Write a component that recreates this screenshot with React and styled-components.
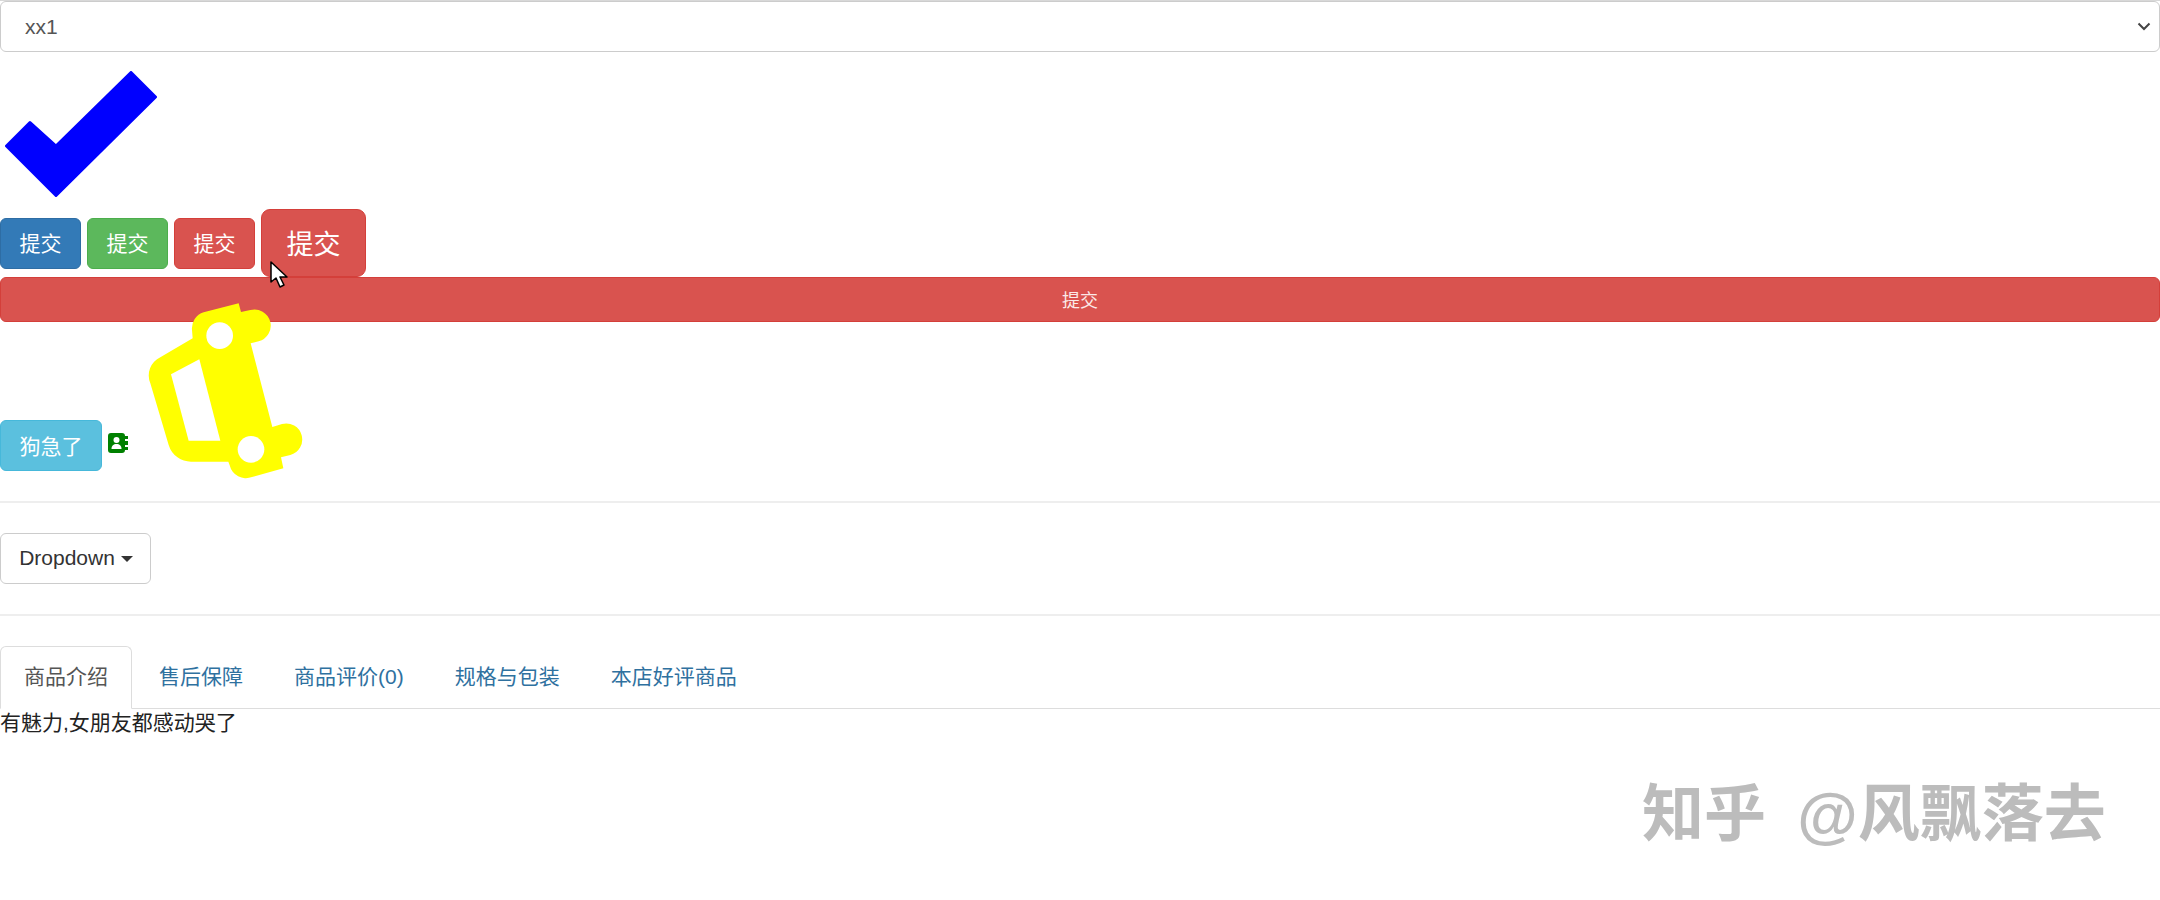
import React from "react";
import styled, { createGlobalStyle } from "styled-components";

const GlobalStyle = createGlobalStyle`
  * {
    box-sizing: border-box;
  }
  html, body {
    margin: 0;
    padding: 0;
    background: #fff;
  }
  body {
    font-family: "Liberation Sans", "Noto Sans CJK SC", sans-serif;
    font-size: 21px;
    line-height: 30px;
    color: #333;
  }
`;

const Page = styled.div`
  position: relative;
  min-height: 900px;
  border-top: 1px solid #d8d8d8;
  overflow: hidden;
`;

const Select = styled.select`
  display: block;
  width: 100%;
  height: 51px;
  padding: 0 40px 0 24px;
  border: 1px solid #ccc;
  border-radius: 6px;
  background-color: #fff;
  background-image: url("data:image/svg+xml,%3Csvg xmlns='http://www.w3.org/2000/svg' width='14' height='9' viewBox='0 0 14 9'%3E%3Cpath d='M1.5 1.5 7 7l5.5-5.5' fill='none' stroke='%23444' stroke-width='2'/%3E%3C/svg%3E");
  background-repeat: no-repeat;
  background-position: right 8px center;
  appearance: none;
  font: inherit;
  color: #555;
`;

const CheckIcon = styled.svg`
  display: block;
  width: 160px;
  height: 127px;
  margin: 19px 0 11px;
`;

const ButtonRow = styled.div`
  display: flex;
  align-items: center;
  gap: 6px;
`;

const colours = {
  primary: ["#337ab7", "#2e6da4"],
  success: ["#5cb85c", "#4cae4c"],
  danger: ["#d9534f", "#d43f3a"],
  info: ["#5bc0de", "#46b8da"],
};

const Button = styled.button`
  display: block;
  width: ${(p) => (p.$block ? "100%" : p.$width)};
  height: ${(p) => (p.$large ? "68px" : p.$block ? "45px" : "51px")};
  padding: 0 0 2px;
  border: 1px solid ${(p) => colours[p.$kind][1]};
  border-radius: ${(p) => (p.$large ? "9px" : "6px")};
  background: ${(p) => colours[p.$kind][0]};
  color: ${(p) => (p.$block ? "#fbe9e8" : "#fff")};
  font-family: inherit;
  font-size: ${(p) => (p.$large ? "27px" : p.$block ? "18px" : "21px")};
`;

const InfoRow = styled.div`
  position: relative;
  display: flex;
  align-items: center;
  gap: 6px;
  margin-top: 98px;
`;

const ContactIcon = styled.svg`
  display: block;
  width: 20px;
  height: 20px;
  margin-bottom: 5px;
`;

const CarIcon = styled.svg`
  position: absolute;
  left: 147px;
  top: -120px;
  width: 160px;
  height: 180px;
`;

const Rule = styled.hr`
  height: 2px;
  margin: 30px 0;
  border: 0;
  background: #eee;
`;

const DropdownButton = styled.button`
  display: flex;
  align-items: center;
  justify-content: center;
  gap: 6px;
  width: 151px;
  height: 51px;
  padding: 0 0 2px 1px;
  border: 1px solid #ccc;
  border-radius: 6px;
  background: #fff;
  color: #333;
  font-family: inherit;
  font-size: 21px;
`;

const Caret = styled.span`
  width: 0;
  height: 0;
  margin-top: 2px;
  border-top: 6px solid #333;
  border-left: 6px solid transparent;
  border-right: 6px solid transparent;
`;

const Tabs = styled.ul`
  display: flex;
  gap: 3px;
  margin: 0;
  padding: 0;
  list-style: none;
  border-bottom: 1px solid #ddd;
`;

const Tab = styled.li`
  height: 63px;
  margin-bottom: -1px;
  padding: 0 23px;
  border: 1px solid ${(p) => (p.$active ? "#ddd" : "transparent")};
  border-bottom-color: ${(p) => (p.$active ? "#fff" : "transparent")};
  border-radius: 6px 6px 0 0;
  background: ${(p) => (p.$active ? "#fff" : "transparent")};
  color: ${(p) => (p.$active ? "#555" : "#2f719f")};
  line-height: 60px;
`;

const TabBody = styled.div`
  line-height: 27px;
  color: #222;
`;

const Pointer = styled.svg`
  position: absolute;
  left: 270px;
  top: 260px;
  width: 19px;
  height: 27px;
`;

const Watermark = styled.div`
  position: absolute;
  left: 1642px;
  top: 772px;
  font-size: 62px;
  line-height: 84px;
  font-weight: 700;
  word-spacing: 14px;
  color: #bcbcbc;
  white-space: nowrap;
`;

const tabs = ["商品介绍", "售后保障", "商品评价(0)", "规格与包装", "本店好评商品"];

export default function App() {
  return (
    <Page>
      <GlobalStyle />
      <Select defaultValue="xx1">
        <option value="xx1">xx1</option>
      </Select>

      <CheckIcon viewBox="0 0 160 127">
        <path
          d="M131 1.500 155.500 26 56 124.500 6.500 75 30 51.500 56 75Z"
          fill="#0000ff"
          stroke="#0000ff"
          strokeWidth="3"
          strokeLinejoin="round"
        />
      </CheckIcon>

      <ButtonRow>
        <Button $kind="primary" $width="81px">提交</Button>
        <Button $kind="success" $width="81px">提交</Button>
        <Button $kind="danger" $width="81px">提交</Button>
        <Button $kind="danger" $width="105px" $large>提交</Button>
      </ButtonRow>
      <Button $kind="danger" $block>提交</Button>

      <InfoRow>
        <Button $kind="info" $width="102px">狗急了</Button>
        <ContactIcon viewBox="0 0 20 20">
          <path
            d="M3 0h11a3 3 0 0 1 3 3h3v3h-3v2h3v4h-3v2h3v3h-3a3 3 0 0 1-3 3H3a3 3 0 0 1-3-3V3a3 3 0 0 1 3-3Z"
            fill="#008000"
          />
          <circle cx="8.500" cy="7" r="3" fill="#fff" />
          <path d="M3.500 16c0-3.500 2-5 5-5s5 1.500 5 5Z" fill="#fff" />
        </ContactIcon>
        <CarIcon viewBox="440 60 480 540">
          <path
            d="M715 70 722 96 750 90A48 48 0 0 1 775 184L751 190 816 441 845 432A48 48 0 0 1 870 525L842 532 849 565 755 591A50 50 0 0 1 688 556L684 545H575A70 70 0 0 1 505 495L450 310A60 60 0 0 1 480 232L577 175 575 150A50 50 0 0 1 610 97Z"
            fill="#ffff00"
          />
          <path d="M512 283 597 238 660 482H565Z" fill="#fff" />
          <circle cx="658" cy="167" r="40" fill="#fff" />
          <circle cx="752" cy="508" r="40" fill="#fff" />
        </CarIcon>
      </InfoRow>

      <Rule />
      <DropdownButton>
        Dropdown
        <Caret />
      </DropdownButton>
      <Rule />

      <Tabs>
        {tabs.map((name, i) => (
          <Tab key={name} $active={i === 0}>{name}</Tab>
        ))}
      </Tabs>
      <TabBody>有魅力,女朋友都感动哭了</TabBody>

      <Pointer viewBox="0 0 19 27">
        <path
          d="M1 1V21L6 17 10 26 14 24 10 16H17Z"
          fill="#fff"
          stroke="#000"
          strokeWidth="1.500"
          strokeLinejoin="round"
        />
      </Pointer>

      <Watermark>知乎 @风飘落去</Watermark>
    </Page>
  );
}
